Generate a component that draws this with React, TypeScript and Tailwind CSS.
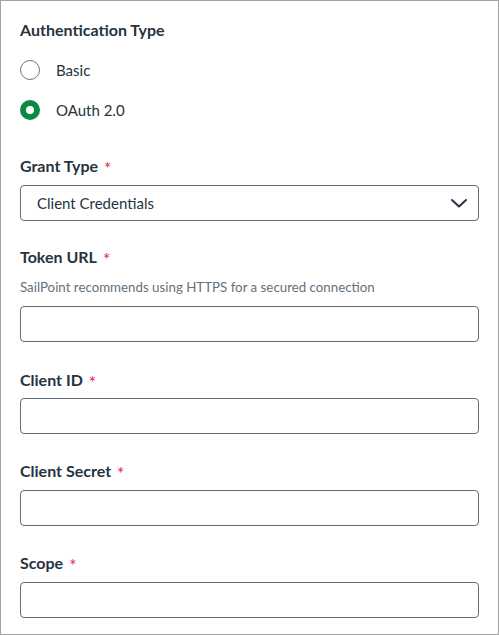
import React from "react";

function Label({ text }: { text: string }) {
  return (
    <div className="flex items-center h-[20px] text-[16px] font-bold text-[#263340]">
      <span>{text}</span>
      <span className="ml-[6px] text-[#e0245e] text-[17px] font-normal relative top-[3px]">*</span>
    </div>
  );
}

function Input() {
  return <div className="h-[36px] rounded-[4px] border border-[#5f6e7c] bg-white" />;
}

export default function App() {
  return (
    <div
      className="w-[499px] h-[635px] border border-[#a3a3a3] bg-white box-border px-[19px] pt-[19px]"
      style={{ fontFamily: "Lato, 'Noto Sans', sans-serif" }}
    >
      <div className="h-[20px] flex items-center text-[16px] font-bold text-[#263340]">Authentication Type</div>
      <div className="mt-[20px] flex items-center h-[20px]">
        <div className="w-[20px] h-[20px] rounded-full border border-[#6b7785] bg-white" />
        <span className="ml-[16px] text-[15px] text-[#263340]">Basic</span>
      </div>
      <div className="mt-[20px] flex items-center h-[20px]">
        <div className="w-[20px] h-[20px] rounded-full border-[6px] border-[#0b8a43] bg-white" />
        <span className="ml-[16px] text-[15px] text-[#263340]">OAuth 2.0</span>
      </div>

      <div className="mt-[36px]">
        <Label text="Grant Type" />
      </div>
      <div className="mt-[9px] h-[36px] rounded-[4px] border border-[#5f6e7c] flex items-center justify-between pl-[16px] pr-[10px]">
        <span className="text-[15px] text-[#263340]">Client Credentials</span>
        <svg width="18" height="12" viewBox="0 0 18 12" fill="none">
          <path d="M2 3 L9 9.5 L16 3" stroke="#263340" strokeWidth="2" strokeLinecap="round" strokeLinejoin="round" />
        </svg>
      </div>

      <div className="mt-[26px]">
        <Label text="Token URL" />
      </div>
      <div className="mt-[12px] h-[18px] flex items-center text-[13.3px] text-[#65717d]">
        SailPoint recommends using HTTPS for a secured connection
      </div>
      <div className="mt-[9px]">
        <Input />
      </div>

      <div className="mt-[28px]">
        <Label text="Client ID" />
      </div>
      <div className="mt-[8px]">
        <Input />
      </div>

      <div className="mt-[27px]">
        <Label text="Client Secret" />
      </div>
      <div className="mt-[9px]">
        <Input />
      </div>

      <div className="mt-[27px]">
        <Label text="Scope" />
      </div>
      <div className="mt-[9px]">
        <Input />
      </div>
    </div>
  );
}
